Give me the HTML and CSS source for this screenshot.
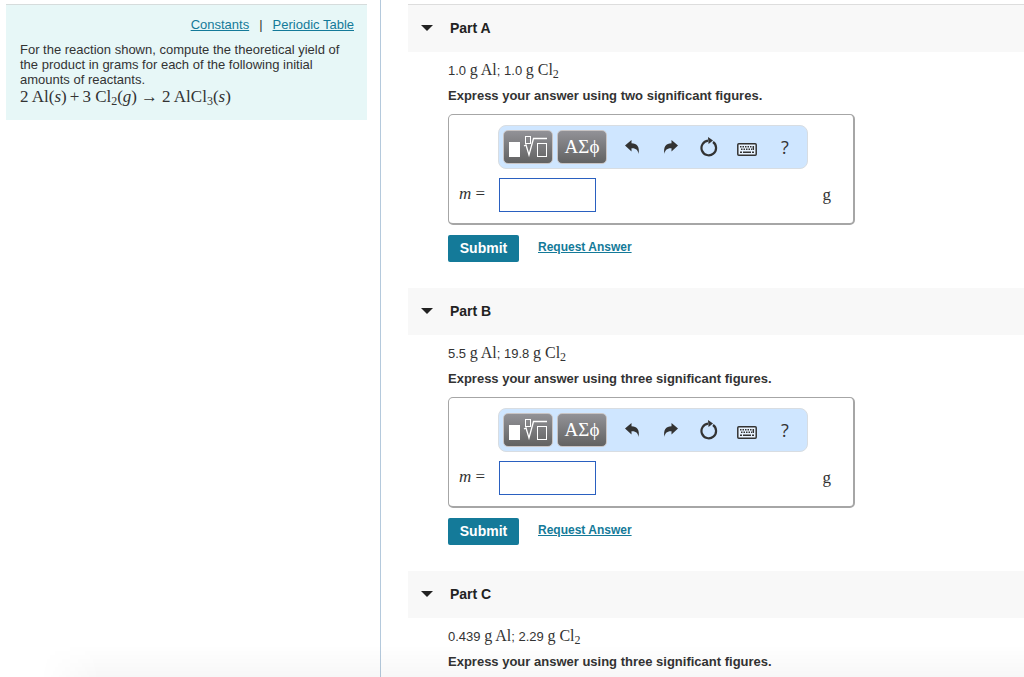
FILE: index.html
```html
<!DOCTYPE html>
<html lang="en">
<head>
    <meta charset="utf-8">
    <title>Theoretical Yield</title>
    <link rel="stylesheet" href="styles.css">
</head>
<body>
    <!-- Shared toolbar icons -->
    <svg class="sprite" aria-hidden="true">
        <symbol id="icon-template" viewBox="0 0 40 24">
            <rect x="1" y="7" width="11" height="15" fill="#fff"/>
            <g fill="none" stroke="#fff">
                <rect x="17.500" y="1.500" width="5" height="7"/>
                <path d="M16 11l2-1 3 10 4.500-16.500H39" stroke-width="1.300"/>
                <rect x="29.500" y="8.500" width="9" height="13"/>
            </g>
        </symbol>
        <symbol id="icon-undo" viewBox="0 0 16 16">
            <path d="M0 6.500L6.500 1v3.200c5.500 0 8.500 3.800 7 10.800-.3-3.600-2.500-6-7-5.700v3.200z" fill="#333"/>
        </symbol>
        <symbol id="icon-redo" viewBox="0 0 16 16">
            <path d="M15 6.500L8.500 1v3.200C3 4.200 0 8 1.500 15c.3-3.600 2.500-6 7-5.700v3.200z" fill="#333"/>
        </symbol>
        <symbol id="icon-reset" viewBox="0 0 18 20">
            <path d="M13 5a7.300 7.300 0 1 1-5-1.300" fill="none" stroke="#333" stroke-width="2.200"/>
            <path d="M8 0l5 3.500L8.500 7z" fill="#333"/>
        </symbol>
        <symbol id="icon-keyboard" viewBox="0 0 20 13">
            <rect x=".800" y=".800" width="18.400" height="11.400" rx="1" fill="#e8f3ff" stroke="#333" stroke-width="1.500"/>
            <path d="M3 3.800h12M4 6.300h11" stroke="#333" stroke-width="1.600" stroke-dasharray="1.500 1"/>
            <path d="M3 9.200h2M6 9.200h8M15 9.200h2M16.300 3v4" stroke="#333" stroke-width="1.500"/>
        </symbol>
    </svg>

    <div class="page">
        <aside class="sidebar">
            <div class="problem">
                <nav class="resources">
                    <a href="#">Constants</a>
                    <span>|</span>
                    <a href="#">Periodic Table</a>
                </nav>
                <p>For the reaction shown, compute the theoretical yield of the product in grams for each of the following initial amounts of reactants.</p>
                <p class="math equation">2 Al(<i>s</i>)<span class="op">+</span>3 Cl<sub>2</sub>(<i>g</i>)<span class="rel">→</span>2 AlCl<sub>3</sub>(<i>s</i>)</p>
            </div>
        </aside>

        <main class="parts">
            <section class="part">
                <h2 class="part-header">Part A</h2>
                <div class="part-body">
                    <p class="given">1.0 <span class="math">g Al</span>; 1.0 <span class="math">g Cl<sub>2</sub></span></p>
                    <p class="prompt">Express your answer using two significant figures.</p>
                    <form>
                        <div class="answer-box">
                            <div class="toolbar">
                                <button type="button" class="tool-dark" aria-label="Templates"><svg class="template"><use href="#icon-template"/></svg></button>
                                <button type="button" class="tool-dark">ΑΣϕ</button>
                                <div class="tools">
                                    <button type="button" class="tool" aria-label="Undo"><svg class="arrow"><use href="#icon-undo"/></svg></button>
                                    <button type="button" class="tool" aria-label="Redo"><svg class="arrow"><use href="#icon-redo"/></svg></button>
                                    <button type="button" class="tool" aria-label="Reset"><svg class="reset"><use href="#icon-reset"/></svg></button>
                                    <button type="button" class="tool" aria-label="Keyboard shortcuts"><svg class="keyboard"><use href="#icon-keyboard"/></svg></button>
                                    <button type="button" class="tool">?</button>
                                </div>
                            </div>
                            <div class="answer-row">
                                <label for="massA"><i>m</i> =</label>
                                <input type="text" id="massA">
                                <span class="unit">g</span>
                            </div>
                        </div>
                        <div class="actions">
                            <button type="submit" class="submit-button">Submit</button>
                            <a href="#">Request Answer</a>
                        </div>
                    </form>
                </div>
            </section>

            <section class="part">
                <h2 class="part-header">Part B</h2>
                <div class="part-body">
                    <p class="given">5.5 <span class="math">g Al</span>; 19.8 <span class="math">g Cl<sub>2</sub></span></p>
                    <p class="prompt">Express your answer using three significant figures.</p>
                    <form>
                        <div class="answer-box">
                            <div class="toolbar">
                                <button type="button" class="tool-dark" aria-label="Templates"><svg class="template"><use href="#icon-template"/></svg></button>
                                <button type="button" class="tool-dark">ΑΣϕ</button>
                                <div class="tools">
                                    <button type="button" class="tool" aria-label="Undo"><svg class="arrow"><use href="#icon-undo"/></svg></button>
                                    <button type="button" class="tool" aria-label="Redo"><svg class="arrow"><use href="#icon-redo"/></svg></button>
                                    <button type="button" class="tool" aria-label="Reset"><svg class="reset"><use href="#icon-reset"/></svg></button>
                                    <button type="button" class="tool" aria-label="Keyboard shortcuts"><svg class="keyboard"><use href="#icon-keyboard"/></svg></button>
                                    <button type="button" class="tool">?</button>
                                </div>
                            </div>
                            <div class="answer-row">
                                <label for="massB"><i>m</i> =</label>
                                <input type="text" id="massB">
                                <span class="unit">g</span>
                            </div>
                        </div>
                        <div class="actions">
                            <button type="submit" class="submit-button">Submit</button>
                            <a href="#">Request Answer</a>
                        </div>
                    </form>
                </div>
            </section>

            <section class="part">
                <h2 class="part-header">Part C</h2>
                <div class="part-body">
                    <p class="given">0.439 <span class="math">g Al</span>; 2.29 <span class="math">g Cl<sub>2</sub></span></p>
                    <p class="prompt">Express your answer using three significant figures.</p>
                </div>
            </section>
        </main>
    </div>
</body>
</html>
```
FILE: styles.css
```css
* {
    box-sizing: border-box;
}
body {
    margin: 0;
    font-family: "Liberation Sans", Arial, sans-serif;
    font-size: 13px;
    color: #333;
    background-color: white;
}
/* fade along the bottom edge of the window */
body::after {
    content: "";
    position: fixed;
    left: 40px;
    right: 0;
    bottom: 0;
    height: 32px;
    background: linear-gradient(rgba(0,0,0,0), rgba(0,0,0,0.03));
    -webkit-mask-image: linear-gradient(to right, transparent, black 60px);
    mask-image: linear-gradient(to right, transparent, black 60px);
    pointer-events: none;
}
p, h2 {
    margin: 0;
}
a {
    color: #147a99;
}
.sprite {
    display: none;
}
.page {
    display: flex;
    min-height: 100vh;
}
.sidebar {
    width: 381px;
    flex-shrink: 0;
    padding: 4px 13px 0 6px;
    border-right: 1px solid #b4c9dc;
}
.problem {
    padding: 12px 13px 14px 14px;
    border-top: 1px solid #d6dcdc;
    background-color: #e7f7f7;
    line-height: 15px;
}
.resources {
    display: flex;
    justify-content: flex-end;
    gap: 10px;
    margin-bottom: 10px;
}
.math {
    font-family: "Liberation Serif", "Times New Roman", serif;
    font-size: 16px;
}
sub {
    font-size: 12px;
    line-height: 0;
    vertical-align: -3px;
}
.equation {
    font-size: 17px;
    line-height: 19px;
}
.op {
    margin: 0 3px;
}
.rel {
    margin: 0 4px;
}
.parts {
    flex: 1;
    min-width: 0;
    padding: 4px 0 0 27px;
}
.part-header {
    display: flex;
    align-items: center;
    gap: 17px;
    height: 47px;
    padding: 0 0 2px 13px;
    background-color: #f8f8f8;
    font-size: 14px;
    color: #222;
}
.part-header::before {
    content: "";
    border: 6px solid transparent;
    border-top-color: #222;
    border-bottom: 0;
}
.part:first-child .part-header {
    height: 48px;
    border-top: 1px solid #ddd;
}
.part-body {
    padding: 8px 20px 0 40px;
}
.given {
    line-height: 20px;
}
.prompt {
    padding: 6px 0 9px;
    line-height: 18px;
    font-weight: bold;
}
.answer-box {
    max-width: 407px;
    height: 111px;
    padding: 10px 22px 0 10px;
    border: 1px solid #a6a6a6;
    border-width: 1px 2px 2px 1px;
    border-radius: 5px;
}
.toolbar {
    display: flex;
    align-items: center;
    width: 310px;
    height: 44px;
    margin-left: 39px;
    padding-left: 4px;
    border: 1px solid #d8dde2;
    border-radius: 8px;
    background-color: #cfe6ff;
}
.toolbar button {
    display: flex;
    align-items: center;
    justify-content: center;
    padding: 0;
    cursor: pointer;
}
.tool-dark {
    width: 50px;
    height: 34px;
    margin-right: 4px;
    border: 1px solid #c8c4c4;
    border-radius: 5px;
    background: linear-gradient(#929297, #626262);
    color: white;
    font-family: "Liberation Serif", serif;
    font-size: 19px;
    line-height: 20px;
}
.tools {
    display: flex;
    margin-left: 3px;
}
.tool {
    width: 38px;
    height: 34px;
    border: none;
    background: none;
    color: #333;
    font-family: "Open Sans", sans-serif;
    font-size: 18px;
    line-height: 20px;
}
.template {
    width: 40px;
    height: 24px;
}
.arrow {
    width: 16px;
    height: 16px;
}
.reset {
    width: 18px;
    height: 20px;
}
.keyboard {
    width: 20px;
    height: 13px;
    margin-top: 4px;
}
.answer-row {
    display: flex;
    align-items: center;
    margin-top: 9px;
}
.answer-row label {
    width: 40px;
    padding-bottom: 3px;
    font-family: "Liberation Serif", serif;
    font-size: 17px;
}
.answer-row input {
    width: 97px;
    height: 34px;
    border: 1px solid #2a60c0;
    font-size: 16px;
}
.unit {
    margin-left: auto;
    font-family: "Liberation Serif", serif;
    font-size: 17px;
}
.actions {
    display: flex;
    align-items: center;
    gap: 19px;
    padding: 10px 0 26px;
}
.actions a {
    padding-bottom: 3px;
    font-weight: bold;
    font-size: 12px;
}
.submit-button {
    width: 71px;
    height: 27px;
    padding: 0 0 2px;
    border: none;
    border-radius: 2px;
    background-color: #147a99;
    color: white;
    font-family: inherit;
    font-size: 14px;
    font-weight: bold;
    cursor: pointer;
}
```
